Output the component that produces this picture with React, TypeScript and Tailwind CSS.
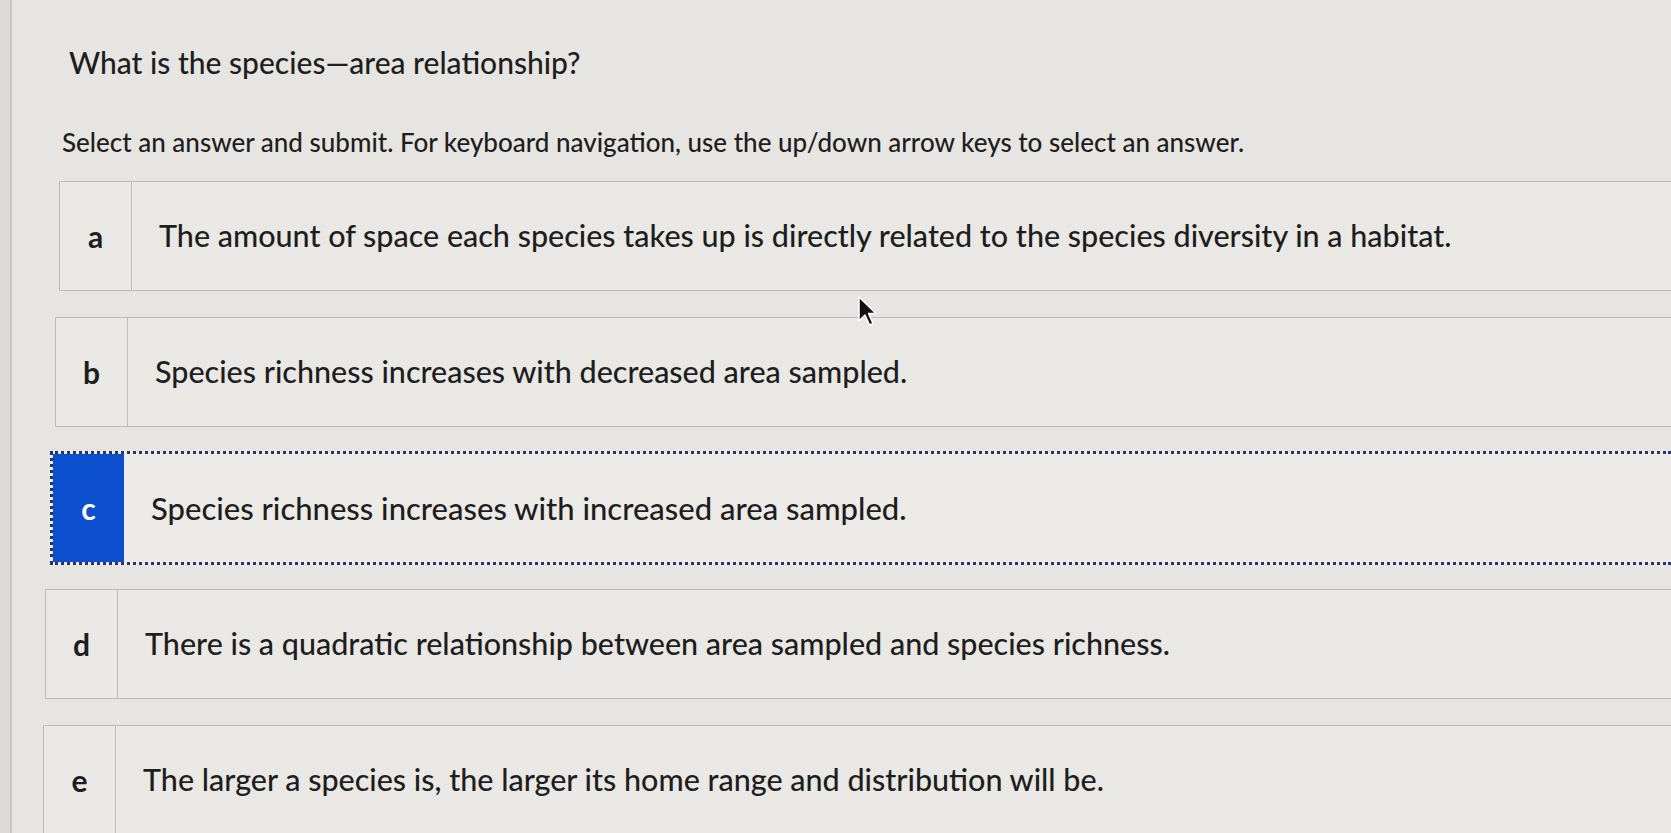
import React from "react";

type Option = {
  letter: string;
  text: string;
  shift: string;
};

// the photo is slightly skewed, so each row starts a little further left
const options: Option[] = [
  {
    letter: "a",
    text: "The amount of space each species takes up is directly related to the species diversity in a habitat.",
    shift: "ml-[16px]",
  },
  { letter: "b", text: "Species richness increases with decreased area sampled.", shift: "ml-[12px]" },
  { letter: "c", text: "Species richness increases with increased area sampled.", shift: "ml-[7px]" },
  {
    letter: "d",
    text: "There is a quadratic relationship between area sampled and species richness.",
    shift: "ml-[2px]",
  },
  {
    letter: "e",
    text: "The larger a species is, the larger its home range and distribution will be.",
    shift: "ml-0",
  },
];

const selected = "c";

function Cursor() {
  return (
    <svg
      className="absolute left-[857px] top-[295px]"
      width="22"
      height="34"
      viewBox="0 0 22 34"
    >
      <path
        d="M2 2 L2 26 L8 20 L12.5 30 L16 28.5 L11.5 18.5 L19 18.5 Z"
        fill="#111"
        stroke="#fff"
        strokeWidth="1.5"
        strokeLinejoin="round"
      />
    </svg>
  );
}

export default function App() {
  return (
    <div
      className="relative min-h-screen h-[833px] overflow-hidden bg-[#e6e5e1] text-[#1e1e1e] font-medium"
      style={{ fontFamily: "Lato, 'Noto Sans', sans-serif" }}
    >
      <div className="absolute left-0 top-0 bottom-0 w-[12px] bg-[#dcdbd7] border-r-2 border-[#c8c7c3]" />

      <div className="pl-[69px] pt-[46px] text-[30px] leading-[32px]">
        What is the species—area relationship?
      </div>

      <div className="pl-[62px] mt-[49px] text-[26px] leading-[30px]">
        Select an answer and submit. For keyboard navigation, use the up/down arrow keys to select an answer.
      </div>

      <div className="flex flex-col gap-[26px] mt-[24px] pl-[43px]">
        {options.map((o) =>
          o.letter === selected ? (
            <div
              key={o.letter}
              className={`${o.shift} flex h-[114px] -mt-[2px] -mb-[2px] border-[3px] border-r-0 border-dotted border-[#26336e] bg-[#ecebe7]`}
            >
              <div className="w-[71px] shrink-0 flex items-center justify-center bg-[#0b4fcf] text-white font-bold text-[30px]">
                {o.letter}
              </div>
              <div className="flex items-center pl-[27px] text-[31px] whitespace-nowrap">
                {o.text}
              </div>
            </div>
          ) : (
            <div
              key={o.letter}
              className={`${o.shift} flex h-[110px] border border-r-0 border-[#bdbcb8] bg-[#e9e8e4]`}
            >
              <div className="w-[72px] shrink-0 flex items-center justify-center border-r border-[#bdbcb8] font-bold text-[30px]">
                {o.letter}
              </div>
              <div className="flex items-center pl-[27px] text-[30.5px] whitespace-nowrap">
                {o.text}
              </div>
            </div>
          )
        )}
      </div>

      <Cursor />
    </div>
  );
}
